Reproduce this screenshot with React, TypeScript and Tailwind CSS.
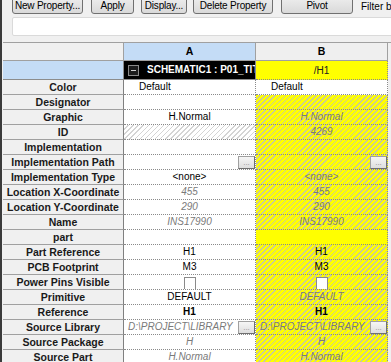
import React from "react";

type Cell = {
  text?: string;
  v?: "n" | "i" | "b";
  hatch?: boolean;
  yellow?: boolean;
  left?: boolean;
  btn?: boolean;
  check?: boolean;
};

type Row = { label: string; a: Cell; b: Cell };

const rows: Row[] = [
  { label: "Color", a: { text: "Default", left: true }, b: { text: "Default", left: true } },
  { label: "Designator", a: {}, b: { yellow: true, hatch: true } },
  { label: "Graphic", a: { text: "H.Normal" }, b: { text: "H.Normal", v: "i", yellow: true, hatch: true } },
  { label: "ID", a: { hatch: true }, b: { text: "4269", v: "i", yellow: true, hatch: true } },
  { label: "Implementation", a: {}, b: { yellow: true, hatch: true } },
  { label: "Implementation Path", a: { btn: true }, b: { yellow: true, hatch: true, btn: true } },
  { label: "Implementation Type", a: { text: "<none>" }, b: { text: "<none>", v: "i", yellow: true, hatch: true } },
  { label: "Location X-Coordinate", a: { text: "455", v: "i" }, b: { text: "455", v: "i", yellow: true, hatch: true } },
  { label: "Location Y-Coordinate", a: { text: "290", v: "i" }, b: { text: "290", v: "i", yellow: true, hatch: true } },
  { label: "Name", a: { text: "INS17990", v: "i" }, b: { text: "INS17990", v: "i", yellow: true, hatch: true } },
  { label: "part", a: {}, b: { yellow: true } },
  { label: "Part Reference", a: { text: "H1" }, b: { text: "H1", yellow: true, hatch: true } },
  { label: "PCB Footprint", a: { text: "M3" }, b: { text: "M3", yellow: true, hatch: true } },
  { label: "Power Pins Visible", a: { check: true }, b: { check: true, yellow: true, hatch: true } },
  { label: "Primitive", a: { text: "DEFAULT" }, b: { text: "DEFAULT", v: "i", yellow: true, hatch: true } },
  { label: "Reference", a: { text: "H1", v: "b" }, b: { text: "H1", v: "b", yellow: true, hatch: true } },
  { label: "Source Library", a: { text: "D:\\PROJECT\\LIBRARY", v: "i", left: true, btn: true }, b: { text: "D:\\PROJECT\\LIBRARY", v: "i", left: true, btn: true, yellow: true, hatch: true } },
  { label: "Source Package", a: { text: "H", v: "i" }, b: { text: "H", v: "i", yellow: true, hatch: true } },
  { label: "Source Part", a: { text: "H.Normal", v: "i" }, b: { text: "H.Normal", v: "i", yellow: true, hatch: true } },
];

function bgClass(c: Cell) {
  if (c.yellow && c.hatch)
    return "bg-[#ffff00] bg-[image:repeating-linear-gradient(135deg,#ffff00_0px,#ffff00_2.6px,#c9c99a_2.6px,#c9c99a_3.6px)]";
  if (c.yellow) return "bg-[#ffff00]";
  if (c.hatch)
    return "bg-white bg-[image:repeating-linear-gradient(135deg,#ffffff_0px,#ffffff_2.6px,#d4d4d4_2.6px,#d4d4d4_3.6px)]";
  return "bg-white";
}

function textClass(c: Cell) {
  if (c.v === "i") return "italic text-[#7a7a7a]";
  if (c.v === "b") return "font-bold text-black";
  return "text-black";
}

function DotsButton() {
  return (
    <div className="w-[17px] h-[13px] shrink-0 border border-[#a0a0a0] border-b-[#707070] border-r-[#707070] bg-gradient-to-b from-[#f6f6f6] to-[#dedede] flex items-end justify-center text-[8px] leading-[8px] text-[#909090] pb-[1px]">
      ...
    </div>
  );
}

function DataCell({ c }: { c: Cell }) {
  return (
    <div
      className={`h-[15px] border-b border-r border-dotted border-[#8a8a8a] flex items-center overflow-hidden ${bgClass(c)}`}
    >
      {c.check ? (
        <div className="flex-1 flex justify-center">
          <div className="w-[12px] h-[13px] bg-white border border-[#8a8a8a] mt-[2px]" />
        </div>
      ) : (
        <div
          className={`flex-1 min-w-0 whitespace-nowrap overflow-hidden text-[10px] leading-[14px] ${textClass(c)} ${
            c.left ? (c.btn ? "pl-[4px]" : "pl-[15px]") : "text-center"
          }`}
        >
          {c.text ?? ""}
        </div>
      )}
      {c.btn && <DotsButton />}
    </div>
  );
}

function ToolButton({ label, w }: { label: string; w: number }) {
  return (
    <div
      style={{ width: w }}
      className="h-[21px] -mt-[7px] shrink-0 rounded-[3px] border border-[#707070] bg-gradient-to-b from-[#f2f2f2] to-[#d9d9d9] flex items-end justify-center pb-[1px] text-[10px] tracking-[-0.2px] leading-[13px] text-black whitespace-nowrap overflow-hidden"
    >
      {label}
    </div>
  );
}

export default function App() {
  return (
    <div className="w-[391px] h-[362px] overflow-hidden bg-[#f0f0f0] flex font-['Liberation_Sans',Arial,sans-serif]">
      <div className="w-[2px] shrink-0 bg-[#3a3a3a]" />
      <div className="flex-1 min-w-0 flex flex-col">
        {/* toolbar */}
        <div className="h-[14px] flex items-start pl-[10px]">
          <ToolButton label="New Property..." w={71} />
          <div className="w-[8px] shrink-0" />
          <ToolButton label="Apply" w={43} />
          <div className="w-[7px] shrink-0" />
          <ToolButton label="Display..." w={46} />
          <div className="w-[6px] shrink-0" />
          <ToolButton label="Delete Property" w={80} />
          <div className="w-[8px] shrink-0" />
          <ToolButton label="Pivot" w={72} />
          <div className="pl-[8px] text-[10px] leading-[13px] whitespace-nowrap text-black">Filter by</div>
        </div>
        {/* filter input */}
        <div className="mt-[3px] ml-[10px] -mr-[6px] h-[19px] bg-white border border-[#dadada] rounded-[2px] shrink-0" />
        <div className="h-[6px] shrink-0" />
        {/* grid */}
        <div className="ml-[1px] border-t border-[#a0a0a0] grid grid-cols-[121px_132px_132px]">
          {/* header row */}
          <div className="h-[18px] bg-[#f0f0f0] border-b border-r border-[#a0a0a0]" />
          <div className="h-[18px] bg-[#c4dcf6] border-b border-r border-[#a0a0a0] flex items-center justify-center text-[10.5px] font-bold text-black">
            A
          </div>
          <div className="h-[18px] bg-[#efefef] border-b border-r border-[#a0a0a0] flex items-center justify-center text-[10.5px] font-bold text-black">
            B
          </div>
          {/* title row */}
          <div className="h-[19px] bg-[#c4dcf6] border-b border-r border-[#8c8c8c]" />
          <div className="h-[19px] bg-black border-b border-r border-[#8c8c8c] flex items-center overflow-hidden">
            <div className="ml-[4px] w-[11px] h-[11px] shrink-0 border border-[#8a8a8a] bg-[#1c1c1c] flex items-center justify-center">
              <div className="w-[5px] h-[1px] bg-[#d0d0d0]" />
            </div>
            <div className="ml-[8px] whitespace-nowrap text-[10px] font-bold text-white leading-[12px]">
              SCHEMATIC1 : P01_TITLE
            </div>
          </div>
          <div className="h-[19px] bg-[#ffff00] border-b border-r border-dotted border-[#8a8a8a] flex items-center justify-center text-[10px] text-[#202020]">
            /H1
          </div>
          {rows.map((r) => (
            <React.Fragment key={r.label}>
              <div className="h-[15px] bg-[#f0f0f0] border-b border-r border-[#a0a0a0] border-r-[#808080] flex items-center justify-center whitespace-nowrap text-[10.5px] leading-[14px] font-bold text-[#1a1a1a]">
                {r.label}
              </div>
              <DataCell c={r.a} />
              <DataCell c={r.b} />
            </React.Fragment>
          ))}
        </div>
      </div>
    </div>
  );
}
